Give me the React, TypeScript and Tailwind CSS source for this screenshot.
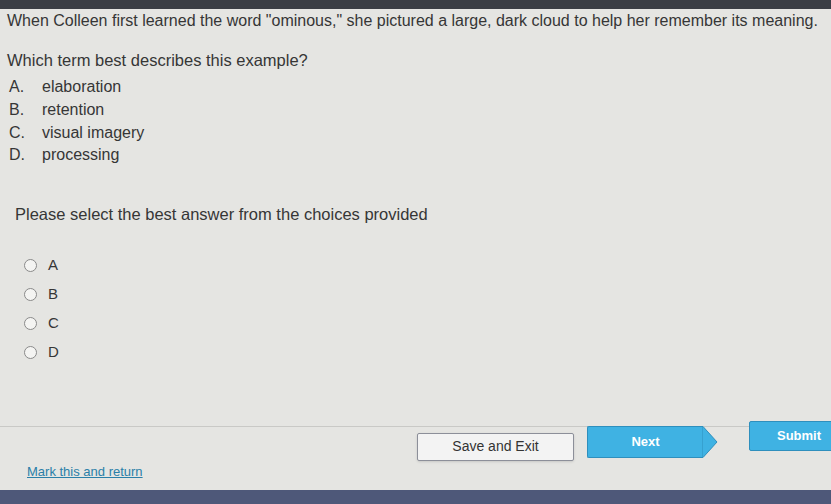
export default function App() {
  const choices = [
    { k: 'A.', t: 'elaboration' },
    { k: 'B.', t: 'retention' },
    { k: 'C.', t: 'visual imagery' },
    { k: 'D.', t: 'processing' },
  ];
  const radios = ['A', 'B', 'C', 'D'];

  return (
    <div className="w-[831px] h-[504px] overflow-hidden bg-[#4e5879] flex flex-col font-['Liberation_Sans',Arial,sans-serif]">
      <div className="h-[9px] bg-[#3b3e45] shrink-0" />
      <div className="flex-1 flex">
        <div className="w-[3px] bg-[#4a4f63]" />
        <div className="flex-1 bg-[#e5e5e2] flex flex-col text-[#363636]">
          <div className="pl-[7px] pt-[1px] text-[16px] leading-[22px]">
            <p className="whitespace-nowrap">
              When Colleen first learned the word "ominous," she pictured a large, dark cloud to help her remember its meaning.
            </p>
            <p className="mt-[17px] text-[16.5px]">Which term best describes this example?</p>
            <div className="mt-[5px] flex flex-col">
              {choices.map((c) => (
                <div key={c.k} className="flex h-[22.7px] items-center">
                  <span className="w-[35px] pl-[2px]">{c.k}</span>
                  <span>{c.t}</span>
                </div>
              ))}
            </div>
          </div>

          <p className="mt-[35px] pl-[15px] text-[16.5px]">Please select the best answer from the choices provided</p>

          <div className="mt-[30px] pl-[24px] flex flex-col gap-[11px] text-[15px]">
            {radios.map((r) => (
              <label key={r} className="flex items-center gap-[11px] h-[18px]">
                <span className="w-[13px] h-[13px] rounded-full border border-[#8a8a8a] bg-[#f4f4f2]" />
                <span>{r}</span>
              </label>
            ))}
          </div>

          <div className="flex-1" />

          <div className="border-t border-[#c9c9c6] pt-[4px] pb-[9px] flex flex-col">
            <div className="flex items-start pl-[417px] gap-[13px]">
              <button className="w-[157px] h-[28px] mt-[2px] bg-[#f3f3f3] border border-[#8c8f99] rounded-[2px] text-[14px] text-[#333] shadow-sm">
                Save and Exit
              </button>
              <div className="flex items-center h-[32px] -mt-[5px]">
                <button className="w-[116px] h-full bg-[#3fb2e3] border border-[#2e8fbd] border-r-0 rounded-l-[2px] text-[13px] font-bold text-white">
                  Next
                </button>
                <svg width="16" height="32" viewBox="0 0 16 32" className="-ml-px">
                  <path d="M0 0.5 L1 0.5 L15 16 L1 31.5 L0 31.5 Z" fill="#3fb2e3" stroke="#2e8fbd" strokeWidth="1" />
                </svg>
              </div>
              <button className="ml-[18px] w-[100px] h-[30px] -mt-[10px] bg-[#3fb2e3] border border-[#2e8fbd] rounded-l-[2px] text-[13px] font-bold text-white">
                Submit
              </button>
            </div>
            <a href="#" className="mt-[1px] ml-[27px] text-[13px] text-[#2a7fa8] underline">
              Mark this and return
            </a>
          </div>
        </div>
      </div>
      <div className="h-[14px] shrink-0" />
    </div>
  );
}
